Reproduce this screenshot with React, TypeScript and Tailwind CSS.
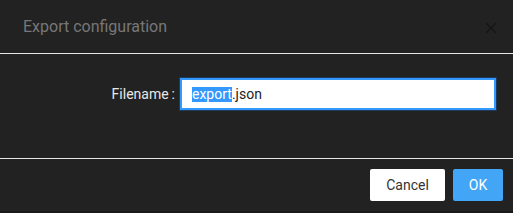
import React from "react";

export default function App() {
  return (
    <div
      className="w-[513px] h-[213px] flex flex-col bg-[#1a1a1a] overflow-hidden"
      style={{ fontFamily: "Roboto, 'Liberation Sans', sans-serif" }}
    >
      <div className="flex flex-col h-[211px] bg-[#222222]">
        {/* header */}
        <div className="h-[54px] flex items-center justify-between pl-[23px] pr-[16px] border-b border-[#e6e6e6]">
          <h2 className="text-[16px] text-[#777777] leading-none">Export configuration</h2>
          <button type="button" className="w-[12px] h-[12px] flex items-center justify-center mt-[2px]">
            <svg width="12" height="12" viewBox="0 0 12 12">
              <path d="M1 1 L11 11 M11 1 L1 11" stroke="#151515" strokeWidth="1.4" />
            </svg>
          </button>
        </div>

        {/* body */}
        <div className="h-[105px] flex items-start pt-[24px] border-b border-[#e6e6e6]">
          <div className="flex items-center">
            <label className="w-[180px] pr-[5px] text-right text-[14px] text-[#e8e8e8]">
              Filename<span className="ml-[3px]">:</span>
            </label>
            <div className="w-[316px] h-[32px] bg-white border-2 border-[#3399ff] shadow-[0_0_0_1px_#1e3a5a] flex items-center pl-[10px]">
              <span className="text-[14px] text-[#222] leading-[15px]">
                <span className="bg-[#3399ff] text-white inline-block leading-[15px]">export</span>.json
              </span>
            </div>
          </div>
        </div>

        {/* footer */}
        <div className="flex-1 flex justify-end items-start pt-[10px] pr-[10px] gap-[8px]">
          <button type="button" className="w-[75px] h-[32px] bg-white text-[#333] text-[14px] rounded-[2px]">
            Cancel
          </button>
          <button type="button" className="w-[50px] h-[32px] bg-[#42a5f5] text-white text-[14px] rounded-[2px]">
            OK
          </button>
        </div>
      </div>
    </div>
  );
}
